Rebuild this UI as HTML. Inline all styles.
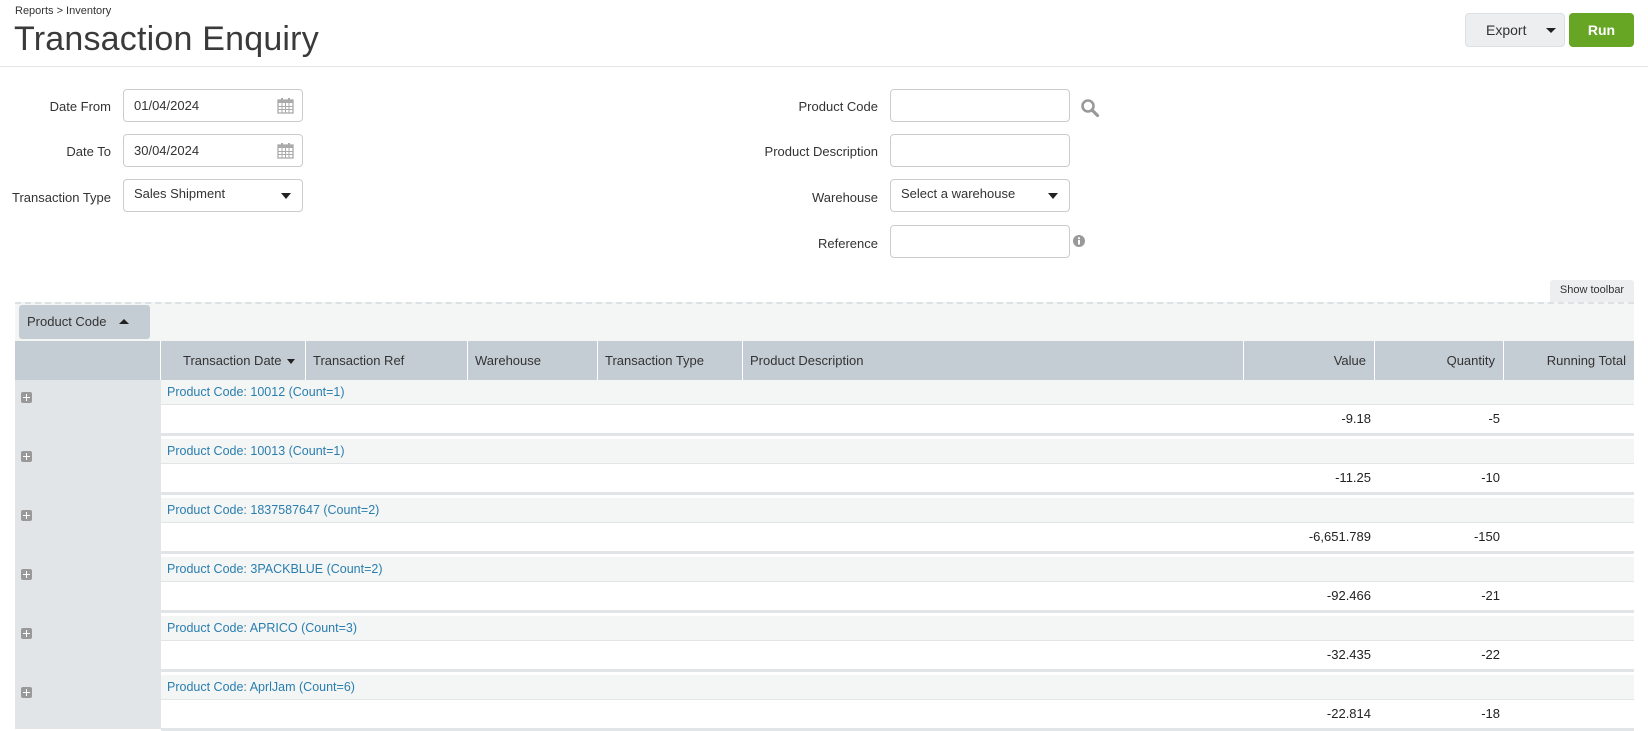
<!DOCTYPE html>
<html><head><meta charset="utf-8"><style>
*{box-sizing:border-box;margin:0;padding:0}
body{width:1648px;height:729px;overflow:hidden;background:#fff;font-family:"Liberation Sans",sans-serif;color:#333;position:relative;font-size:13px}
.a{position:absolute}
.lbl{position:absolute;text-align:right;font-size:13px;color:#333;line-height:16px}
.inp{position:absolute;border:1px solid #ccc;border-radius:4px;background:#fff;height:33px;font-size:13px;line-height:31px;padding-left:10px;color:#333}
.caret{position:absolute;width:0;height:0;border-left:5px solid transparent;border-right:5px solid transparent;border-top:6px solid #222}
.hc{position:absolute;top:341px;height:39px;background:#c5cdd4;line-height:39px;font-size:13px;color:#333}
.gh{position:absolute;left:161px;width:1473px;height:25px;background:#f4f6f6;border-bottom:1px solid #e1e5e8}
.gh span{position:absolute;left:6px;top:5px;color:#2a7eae;font-size:12.5px}
.dr{position:absolute;left:161px;width:1473px;height:30px;background:#fff;border-bottom:3px solid #e1e5e8}
.v{position:absolute;top:5px;font-size:13px;color:#222;text-align:right}
.plus{position:absolute;left:21px;width:11px;height:11px;background:#999;border-radius:2px}
.plus:before{content:"";position:absolute;left:2px;top:5px;width:7px;height:1px;background:#fff}
.plus:after{content:"";position:absolute;left:5px;top:2px;width:1px;height:7px;background:#fff}
</style></head><body>
<div class="a" style="left:15px;top:5px;font-size:11px;color:#333">Reports &gt; Inventory</div>
<div class="a" style="left:14px;top:20px;font-size:34px;color:#3a3a3a;letter-spacing:0.2px">Transaction Enquiry</div>
<div class="a" style="left:1465px;top:13px;width:100px;height:34px;background:#eceef0;border:1px solid #dde0e3;border-radius:4px"><span class="a" style="left:20px;top:8px;font-size:14px;color:#333">Export</span><div class="caret" style="left:80px;top:14px;border-top-width:5px"></div></div>
<div class="a" style="left:1569px;top:13px;width:65px;height:34px;background:#67a524;border-radius:4px;color:#fff;font-size:14px;font-weight:bold;text-align:center;line-height:34px">Run</div>
<div class="a" style="left:0;top:66px;width:1648px;height:1px;background:#e3e7e8"></div>

<div class="lbl" style="left:0;width:111px;top:99px">Date From</div>
<div class="inp" style="left:123px;top:89px;width:180px">01/04/2024
<svg class="a" style="right:8px;top:7px" width="17" height="17" viewBox="0 0 17 17"><rect x="1" y="3" width="15" height="13" fill="none" stroke="#aaa" stroke-width="1.3"/><rect x="1" y="3" width="15" height="3" fill="#aaa"/><path d="M1 9.5H16M1 12.5H16M5 6V16M8.5 6V16M12 6V16" stroke="#aaa" stroke-width="1"/><rect x="4" y="1" width="2" height="4" fill="#aaa"/><rect x="11" y="1" width="2" height="4" fill="#aaa"/></svg></div>
<div class="lbl" style="left:0;width:111px;top:144px">Date To</div>
<div class="inp" style="left:123px;top:134px;width:180px">30/04/2024
<svg class="a" style="right:8px;top:7px" width="17" height="17" viewBox="0 0 17 17"><rect x="1" y="3" width="15" height="13" fill="none" stroke="#aaa" stroke-width="1.3"/><rect x="1" y="3" width="15" height="3" fill="#aaa"/><path d="M1 9.5H16M1 12.5H16M5 6V16M8.5 6V16M12 6V16" stroke="#aaa" stroke-width="1"/><rect x="4" y="1" width="2" height="4" fill="#aaa"/><rect x="11" y="1" width="2" height="4" fill="#aaa"/></svg></div>
<div class="lbl" style="left:0;width:111px;top:190px">Transaction Type</div>
<div class="inp" style="left:123px;top:179px;width:180px;line-height:28px">Sales Shipment<div class="caret" style="left:157px;top:13px"></div></div>

<div class="lbl" style="left:700px;width:178px;top:99px">Product Code</div>
<div class="inp" style="left:890px;top:89px;width:180px"></div>
<svg class="a" style="left:1080px;top:98px" width="20" height="20" viewBox="0 0 20 20"><circle cx="8" cy="8" r="5.5" fill="none" stroke="#999" stroke-width="2.6"/><path d="M12 12L17.5 17.5" stroke="#999" stroke-width="3.2" stroke-linecap="round"/></svg>
<div class="lbl" style="left:700px;width:178px;top:144px">Product Description</div>
<div class="inp" style="left:890px;top:134px;width:180px"></div>
<div class="lbl" style="left:700px;width:178px;top:190px">Warehouse</div>
<div class="inp" style="left:890px;top:179px;width:180px;line-height:28px">Select a warehouse<div class="caret" style="left:157px;top:13px"></div></div>
<div class="lbl" style="left:700px;width:178px;top:236px">Reference</div>
<div class="inp" style="left:890px;top:225px;width:180px"></div>
<svg class="a" style="left:1073px;top:235px" width="12" height="12" viewBox="0 0 12 12"><circle cx="6" cy="6" r="6" fill="#999"/><rect x="5" y="5" width="2" height="4.5" fill="#fff"/><circle cx="6" cy="3.2" r="1.1" fill="#fff"/></svg>

<div class="a" style="left:1550px;top:280px;width:84px;height:22px;background:#eceef0;border-radius:3px 3px 0 0;font-size:11px;color:#333;text-align:center;line-height:20px">Show toolbar</div>
<div class="a" style="left:15px;top:302px;width:1619px;height:39px;background:#f4f6f6;border-top:2px dashed #dde1e3"></div>
<div class="a" style="left:19px;top:305px;width:131px;height:34px;background:#c5cdd4;border-radius:3px;font-size:13px;line-height:34px;padding-left:8px">Product Code<div class="caret" style="left:100px;top:14px;border-top:none;border-bottom:5px solid #222"></div></div>

<div class="hc" style="left:15px;width:145px"></div>
<div class="hc" style="left:161px;width:144px;padding-left:22px">Transaction Date<div class="caret" style="left:126px;top:18px;border-top-width:5px;border-left-width:4px;border-right-width:4px"></div></div>
<div class="hc" style="left:306px;width:161px;padding-left:7px">Transaction Ref</div>
<div class="hc" style="left:468px;width:129px;padding-left:7px">Warehouse</div>
<div class="hc" style="left:598px;width:144px;padding-left:7px">Transaction Type</div>
<div class="hc" style="left:743px;width:500px;padding-left:7px">Product Description</div>
<div class="hc" style="left:1244px;width:130px;text-align:right;padding-right:8px">Value</div>
<div class="hc" style="left:1375px;width:128px;text-align:right;padding-right:8px">Quantity</div>
<div class="hc" style="left:1504px;width:130px;text-align:right;padding-right:8px">Running Total</div>

<div class="a" style="left:15px;top:380px;width:146px;height:349px;background:#e1e5e8"></div>

<div class="plus" style="top:392px"></div>
<div class="gh" style="top:380px"><span>Product Code: 10012 (Count=1)</span></div>
<div class="dr" style="top:406px"><div class="v" style="right:263px">-9.18</div><div class="v" style="right:134px">-5</div></div>

<div class="plus" style="top:451px"></div>
<div class="gh" style="top:439px"><span>Product Code: 10013 (Count=1)</span></div>
<div class="dr" style="top:465px"><div class="v" style="right:263px">-11.25</div><div class="v" style="right:134px">-10</div></div>

<div class="plus" style="top:510px"></div>
<div class="gh" style="top:498px"><span>Product Code: 1837587647 (Count=2)</span></div>
<div class="dr" style="top:524px"><div class="v" style="right:263px">-6,651.789</div><div class="v" style="right:134px">-150</div></div>

<div class="plus" style="top:569px"></div>
<div class="gh" style="top:557px"><span>Product Code: 3PACKBLUE (Count=2)</span></div>
<div class="dr" style="top:583px"><div class="v" style="right:263px">-92.466</div><div class="v" style="right:134px">-21</div></div>

<div class="plus" style="top:628px"></div>
<div class="gh" style="top:616px"><span>Product Code: APRICO (Count=3)</span></div>
<div class="dr" style="top:642px"><div class="v" style="right:263px">-32.435</div><div class="v" style="right:134px">-22</div></div>

<div class="plus" style="top:687px"></div>
<div class="gh" style="top:675px"><span>Product Code: AprlJam (Count=6)</span></div>
<div class="dr" style="top:701px"><div class="v" style="right:263px">-22.814</div><div class="v" style="right:134px">-18</div></div>
</body></html>
